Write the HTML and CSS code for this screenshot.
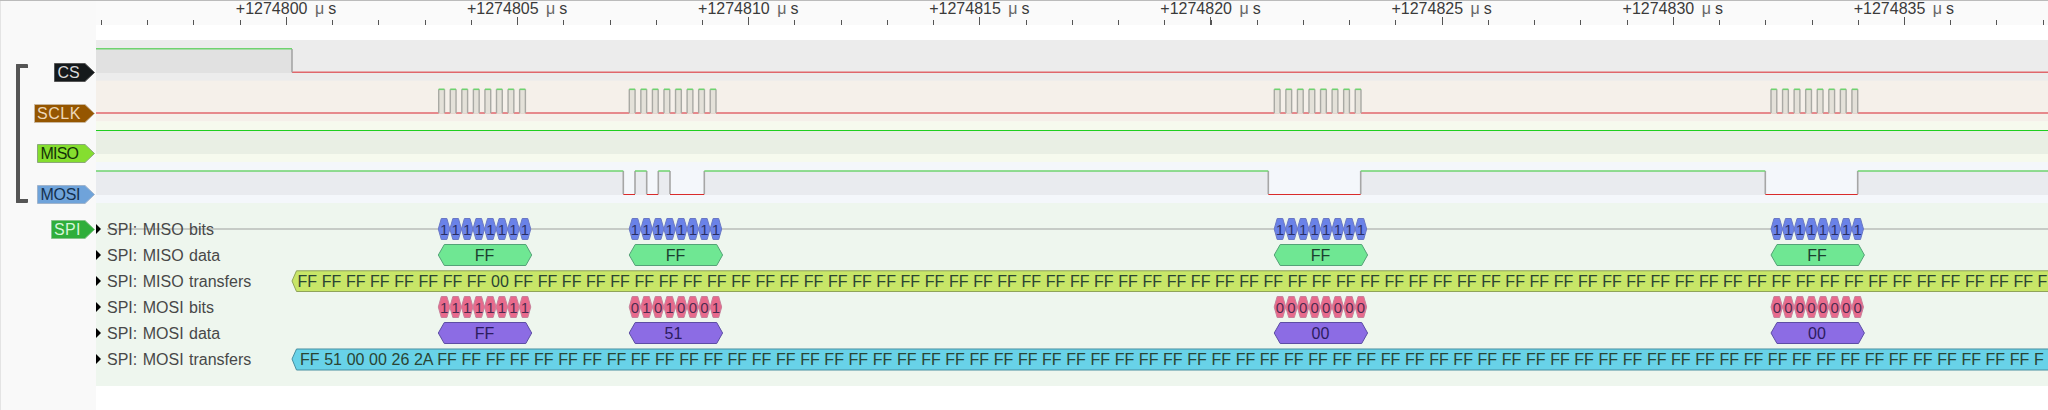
FILE: index.html
```html
<!DOCTYPE html>
<html lang="en">

<head>
    <meta charset="UTF-8">
    <title>SPI capture</title>
    <link rel="stylesheet" href="styles.css">
</head>

<body>
    <main class="viewer">
        <div class="names">
            <div class="channel-group">
                <div class="bracket"></div>
                <div class="channel-tags">
                    <div class="tag-row">
                        <svg class="tag tag-cs" width="41" height="19">
                            <polygon points="0.5,0.5 31,0.5 40.5,9.5 31,18.5 0.5,18.5" />
                            <text x="3.5" y="15">CS</text>
                        </svg>
                    </div>
                    <div class="tag-row">
                        <svg class="tag tag-sclk" width="61" height="19">
                            <polygon points="0.5,0.5 51,0.5 60.5,9.5 51,18.5 0.5,18.5" />
                            <text x="3" y="15">SCLK</text>
                        </svg>
                    </div>
                    <div class="tag-row">
                        <svg class="tag tag-miso" width="58" height="19">
                            <polygon points="0.5,0.5 48,0.5 57.5,9.5 48,18.5 0.5,18.5" />
                            <text x="3.5" y="15">MISO</text>
                        </svg>
                    </div>
                    <div class="tag-row">
                        <svg class="tag tag-mosi" width="58" height="19">
                            <polygon points="0.5,0.5 48,0.5 57.5,9.5 48,18.5 0.5,18.5" />
                            <text x="3.5" y="15">MOSI</text>
                        </svg>
                    </div>
                </div>
            </div>
            <div class="tag-row spi-row">
                <svg class="tag tag-spi" width="44" height="19">
                    <polygon points="0.5,0.5 34,0.5 43.5,9.5 34,18.5 0.5,18.5" />
                    <text x="3" y="15">SPI</text>
                </svg>
            </div>
        </div>

        <div class="tracks">
            <div class="ruler">
                <div class="ruler-labels">
                    <span class="ruler-label">+1274800 <i>μ</i>s</span>
                    <span class="ruler-label">+1274805 <i>μ</i>s</span>
                    <span class="ruler-label">+1274810 <i>μ</i>s</span>
                    <span class="ruler-label">+1274815 <i>μ</i>s</span>
                    <span class="ruler-label">+1274820 <i>μ</i>s</span>
                    <span class="ruler-label">+1274825 <i>μ</i>s</span>
                    <span class="ruler-label">+1274830 <i>μ</i>s</span>
                    <span class="ruler-label">+1274835 <i>μ</i>s</span>
                </div>
                <div class="ticks"></div>
            </div>

            <!-- viewBox uses screen coordinates so the timings read straight off the capture -->
            <svg class="waves" width="1952" height="163" viewBox="96 40 1952 163">
                <defs>
                    <g id="pulse">
                        <rect class="high-clk" x="0" y="89.3" width="5.78" height="24.6" />
                        <path class="edge-thin" d="M0 89.3V113M5.78 89.3V113" />
                        <path class="line-high" d="M0 89.3H5.78" />
                    </g>
                    <g id="clock-burst">
                        <use href="#pulse" x="0" />
                        <use href="#pulse" x="11.56" />
                        <use href="#pulse" x="23.12" />
                        <use href="#pulse" x="34.68" />
                        <use href="#pulse" x="46.24" />
                        <use href="#pulse" x="57.8" />
                        <use href="#pulse" x="69.36" />
                        <use href="#pulse" x="80.92" />
                    </g>
                    <polygon id="bit-cell" points="0,13 3,2.5 8.56,2.5 11.56,13 8.56,23.5 3,23.5" />
                    <g id="byte-cells">
                        <use href="#bit-cell" x="0" />
                        <use href="#bit-cell" x="11.56" />
                        <use href="#bit-cell" x="23.12" />
                        <use href="#bit-cell" x="34.68" />
                        <use href="#bit-cell" x="46.24" />
                        <use href="#bit-cell" x="57.8" />
                        <use href="#bit-cell" x="69.36" />
                        <use href="#bit-cell" x="80.92" />
                    </g>
                    <polygon id="byte-box" points="0,13 6,2.5 87.5,2.5 93.4,13 87.5,23.5 6,23.5" />
                </defs>

                <!-- CS -->
                <rect class="bg-cs" x="96" y="40" width="1952" height="41" />
                <rect class="high-cs" x="96" y="49" width="196" height="24" />
                <path class="line-low" d="M292 72.3H2048" />
                <path class="edge" d="M292 49V72.3" />
                <path class="line-high" d="M96 48.8H292" />

                <!-- SCLK -->
                <rect class="bg-sclk" x="96" y="80.67" width="1952" height="41" />
                <path class="line-low" d="M96 113H2048" />
                <use href="#clock-burst" x="438.7" />
                <use href="#clock-burst" x="629.3" />
                <use href="#clock-burst" x="1274.3" />
                <use href="#clock-burst" x="1771" />

                <!-- MISO -->
                <rect class="bg-miso" x="96" y="121.33" width="1952" height="41" />
                <rect class="high-miso" x="96" y="130" width="1952" height="24" />
                <path class="line-high-crisp" d="M96 130.5H2048" />

                <!-- MOSI -->
                <rect class="bg-mosi" x="96" y="162" width="1952" height="41" />
                <path class="high-mosi" d="M96 171H623.3V195H96ZM635 171H646.7V195H635ZM658.3 171H670V195H658.3ZM704.3 171H1268.3V195H704.3ZM1360.7 171H1765.3V195H1360.7ZM1857.7 171H2048V195H1857.7Z" />
                <path class="edge" d="M623.3 171V194M635 171V194M646.7 171V194M658.3 171V194M670 171V194M704.3 171V194M1268.3 171V194M1360.7 171V194M1765.3 171V194M1857.7 171V194" />
                <path class="line-high" d="M96 171H623.3M635 171H646.7M658.3 171H670M704.3 171H1268.3M1360.7 171H1765.3M1857.7 171H2048" />
                <path class="line-low-crisp" d="M623.3 194.5H635M646.7 194.5H658.3M670 194.5H704.3M1268.3 194.5H1360.7M1765.3 194.5H1857.7" />
            </svg>

            <div class="decoded">
                <div class="dec-row">
                    <svg class="dec-art" width="1952" height="26" viewBox="96 0 1952 26">
                        <path class="idle-line" d="M107 13H2048" />
                        <g class="miso-bits">
                            <use href="#byte-cells" x="438.3" />
                            <use href="#byte-cells" x="629.2" />
                            <use href="#byte-cells" x="1274.2" />
                            <use href="#byte-cells" x="1771" />
                        </g>
                        <g class="dec-text bit-text">
                            <text y="19" x="444.1 455.6 467.2 478.8 490.3 501.9 513.4 525">11111111</text>
                            <text y="19" x="635 646.5 658.1 669.7 681.2 692.8 704.3 715.9">11111111</text>
                            <text y="19" x="1280 1291.5 1303.1 1314.7 1326.2 1337.8 1349.3 1360.9">11111111</text>
                            <text y="19" x="1776.8 1788.3 1799.9 1811.5 1823 1834.6 1846.1 1857.7">11111111</text>
                        </g>
                    </svg>
                    <div class="dec-name"><span class="arrow"></span>SPI: MISO bits</div>
                </div>
                <div class="dec-row">
                    <svg class="dec-art" width="1952" height="26" viewBox="96 0 1952 26">
                        <g class="miso-data">
                            <use href="#byte-box" x="438.3" />
                            <use href="#byte-box" x="629.2" />
                            <use href="#byte-box" x="1274.2" />
                            <use href="#byte-box" x="1771" />
                        </g>
                        <g class="dec-text text-green">
                            <text y="19" x="484.5">FF</text>
                            <text y="19" x="675.5">FF</text>
                            <text y="19" x="1320.5">FF</text>
                            <text y="19" x="1817">FF</text>
                        </g>
                    </svg>
                    <div class="dec-name"><span class="arrow"></span>SPI: MISO data</div>
                </div>
                <div class="dec-row">
                    <svg class="dec-art" width="1952" height="26" viewBox="96 0 1952 26">
                        <polygon class="miso-transfers" points="292,13 296.5,2.8 2060,2.8 2060,23.5 296.5,23.5" />
                        <text class="byte-list" x="297.5" y="19">FF FF FF FF FF FF FF FF 00 FF
                            FF FF FF FF FF FF FF FF FF FF
                            FF FF FF FF FF FF FF FF FF FF
                            FF FF FF FF FF FF FF FF FF FF
                            FF FF FF FF FF FF FF FF FF FF
                            FF FF FF FF FF FF FF FF FF FF
                            FF FF FF FF FF FF FF FF FF FF
                            FF FF F</text>
                    </svg>
                    <div class="dec-name"><span class="arrow"></span>SPI: MISO transfers</div>
                </div>
                <div class="dec-row">
                    <svg class="dec-art" width="1952" height="26" viewBox="96 0 1952 26">
                        <g class="mosi-bits">
                            <use href="#byte-cells" x="438.3" />
                            <use href="#byte-cells" x="629.2" />
                            <use href="#byte-cells" x="1274.2" />
                            <use href="#byte-cells" x="1771" />
                        </g>
                        <g class="dec-text bit-text">
                            <text y="19" x="444.1 455.6 467.2 478.8 490.3 501.9 513.4 525">11111111</text>
                            <text y="19" x="635 646.5 658.1 669.7 681.2 692.8 704.3 715.9">01010001</text>
                            <text y="19" x="1280 1291.5 1303.1 1314.7 1326.2 1337.8 1349.3 1360.9">00000000</text>
                            <text y="19" x="1776.8 1788.3 1799.9 1811.5 1823 1834.6 1846.1 1857.7">00000000</text>
                        </g>
                    </svg>
                    <div class="dec-name"><span class="arrow"></span>SPI: MOSI bits</div>
                </div>
                <div class="dec-row">
                    <svg class="dec-art" width="1952" height="26" viewBox="96 0 1952 26">
                        <g class="mosi-data">
                            <use href="#byte-box" x="438.3" />
                            <use href="#byte-box" x="629.2" />
                            <use href="#byte-box" x="1274.2" />
                            <use href="#byte-box" x="1771" />
                        </g>
                        <g class="dec-text text-purple">
                            <text y="19" x="484.5">FF</text>
                            <text y="19" x="673.5">51</text>
                            <text y="19" x="1320.5">00</text>
                            <text y="19" x="1817">00</text>
                        </g>
                    </svg>
                    <div class="dec-name"><span class="arrow"></span>SPI: MOSI data</div>
                </div>
                <div class="dec-row">
                    <svg class="dec-art" width="1952" height="26" viewBox="96 0 1952 26">
                        <polygon class="mosi-transfers" points="292,13 296.5,3 2060,3 2060,24 296.5,24" />
                        <text class="byte-list" x="300" y="19">FF 51 00 00 26 2A FF FF FF FF
                            FF FF FF FF FF FF FF FF FF FF
                            FF FF FF FF FF FF FF FF FF FF
                            FF FF FF FF FF FF FF FF FF FF
                            FF FF FF FF FF FF FF FF FF FF
                            FF FF FF FF FF FF FF FF FF FF
                            FF FF FF FF FF FF FF FF FF FF
                            FF FF F</text>
                    </svg>
                    <div class="dec-name"><span class="arrow"></span>SPI: MOSI transfers</div>
                </div>
            </div>
        </div>
    </main>
</body>

</html>
```

FILE: styles.css
```css
* {
    box-sizing: border-box;
    margin: 0;
    padding: 0;
}

body {
    width: 2048px;
    height: 410px;
    overflow: hidden;
    background-color: #fff;
    font-family: "Liberation Sans", Arial, sans-serif;
    font-size: 16px;
    color: #3a3a3a;
}

svg {
    display: block;
}

.viewer {
    display: flex;
    height: 100%;
    border-top: 1px solid #bbb;
}

/* left column */
.names {
    width: 96px;
    flex-shrink: 0;
    padding-top: 39px;
    background-color: #f9f9f9;
    border-left: 1px solid #e4e4e4;
}

.channel-group {
    display: flex;
    height: 162.67px;
}

.bracket {
    width: 12px;
    height: 139px;
    margin: 24px 0 0 15px;
    flex-shrink: 0;
    border: 4px solid #555;
    border-right: 0;
    border-radius: 1px;
}

.channel-tags {
    flex-grow: 1;
    display: flex;
    flex-direction: column;
}

.tag-row {
    height: 40.67px;
    padding: 23px 1px 0 0;
    display: flex;
    justify-content: flex-end;
    align-items: flex-start;
}

.spi-row {
    padding-top: 17.33px;
}

.tag text {
    font-size: 16px;
}

.tag-cs polygon {
    fill: #15191b;
    stroke: #555;
}

.tag-cs text {
    fill: #d8d8d8;
}

.tag-sclk polygon {
    fill: #955600;
    stroke: #c9b79f;
}

.tag-sclk text {
    fill: #ecd6b8;
    letter-spacing: 0.5px;
}

.tag-miso polygon {
    fill: #85de2f;
    stroke: #8aa87a;
}

.tag-miso text {
    fill: #143208;
    letter-spacing: -0.8px;
}

.tag-mosi polygon {
    fill: #6fa3da;
    stroke: #a0b4cc;
}

.tag-mosi text {
    fill: #14304e;
    letter-spacing: -0.3px;
}

.tag-spi polygon {
    fill: #2fae3b;
    stroke: #85c48a;
}

.tag-spi text {
    fill: #d6f5d8;
    letter-spacing: 0.3px;
}

/* right column */
.tracks {
    width: 1952px;
    flex-shrink: 0;
}

.ruler {
    height: 24px;
    margin-bottom: 15px;
    background-color: #fafafa;
    overflow: hidden;
}

.ruler-labels {
    display: flex;
    height: 16px;
    padding-left: 74.43px;
}

.ruler-label {
    width: 231.14px;
    flex-shrink: 0;
    line-height: 16px;
    text-align: center;
    white-space: nowrap;
}

.ruler-label i {
    font-style: normal;
    margin: 0 4px 0 3px;
    color: #666;
}

.ticks {
    height: 8px;
    margin-left: 5.1px;
    background:
        repeating-linear-gradient(90deg, transparent 0 184.92px, #555 184.92px 185.92px, transparent 185.92px 231.14px),
        repeating-linear-gradient(90deg, #555 0 1px, transparent 1px 46.23px) no-repeat left bottom / 100% 5px;
    background-repeat: no-repeat;
}

/* analog-looking traces */
.waves path {
    fill: none;
}

.bg-cs {
    fill: #ececec;
}

.high-cs {
    fill: #e1e1e1;
}

.bg-sclk {
    fill: #f5f0ea;
}

.high-clk {
    fill: #e4e1d9;
}

.bg-miso {
    fill: #f6faee;
}

.high-miso {
    fill: #e9efe4;
}

.bg-mosi {
    fill: #f4f7fb;
}

.waves .high-mosi {
    fill: #e9ebef;
}

.line-high {
    stroke: #6fd36f;
    stroke-width: 1.6;
}

.line-high-crisp {
    stroke: #1fce1f;
    stroke-width: 1;
}

.line-low {
    stroke: #e0676c;
    stroke-width: 1.6;
}

.line-low-crisp {
    stroke: #d92b2b;
    stroke-width: 1;
}

.edge {
    stroke: #a6a6a6;
    stroke-width: 1.6;
}

.edge-thin {
    stroke: #a9a9a4;
    stroke-width: 1.4;
}

/* decoded protocol rows */
.decoded {
    height: 183.33px;
    padding-top: 13.33px;
    background-color: #eef6ee;
}

.dec-row {
    display: grid;
    height: 26px;
}

.dec-art,
.dec-name {
    grid-area: 1 / 1;
}

.dec-name {
    display: flex;
    align-items: center;
    padding-top: 2px;
    line-height: 24px;
    color: #484848;
    word-spacing: 1px;
    white-space: nowrap;
    pointer-events: none;
}

.arrow {
    width: 0;
    height: 0;
    margin: 0 6px 3px 0;
    border-left: 5px solid #000;
    border-top: 5.5px solid transparent;
    border-bottom: 5.5px solid transparent;
}

.idle-line {
    fill: none;
    stroke: #b9bcb9;
    stroke-width: 1.5;
}

.miso-bits {
    fill: #6a82e8;
    stroke: #6a78c4;
}

.miso-data {
    fill: #6fe793;
    stroke: #54a277;
}

.miso-transfers {
    fill: #c8e668;
    stroke: #8fa35a;
}

.mosi-bits {
    fill: #e86a8c;
    stroke: #c8809a;
}

.mosi-data {
    fill: #8c6ce4;
    stroke: #5d4ea4;
}

.mosi-transfers {
    fill: #68d2e8;
    stroke: #468ea0;
}

.dec-text text {
    font-size: 16px;
    text-anchor: middle;
    fill: #14143a;
}

.dec-text.bit-text text {
    font-size: 15px;
    fill-opacity: 0.75;
}

.dec-text.text-green text {
    fill: #1c4030;
}

.dec-text.text-purple text {
    fill: #2c1c60;
}

.byte-list {
    font-size: 16px;
    word-spacing: 0.2px;
    fill: #2a4433;
}
```
